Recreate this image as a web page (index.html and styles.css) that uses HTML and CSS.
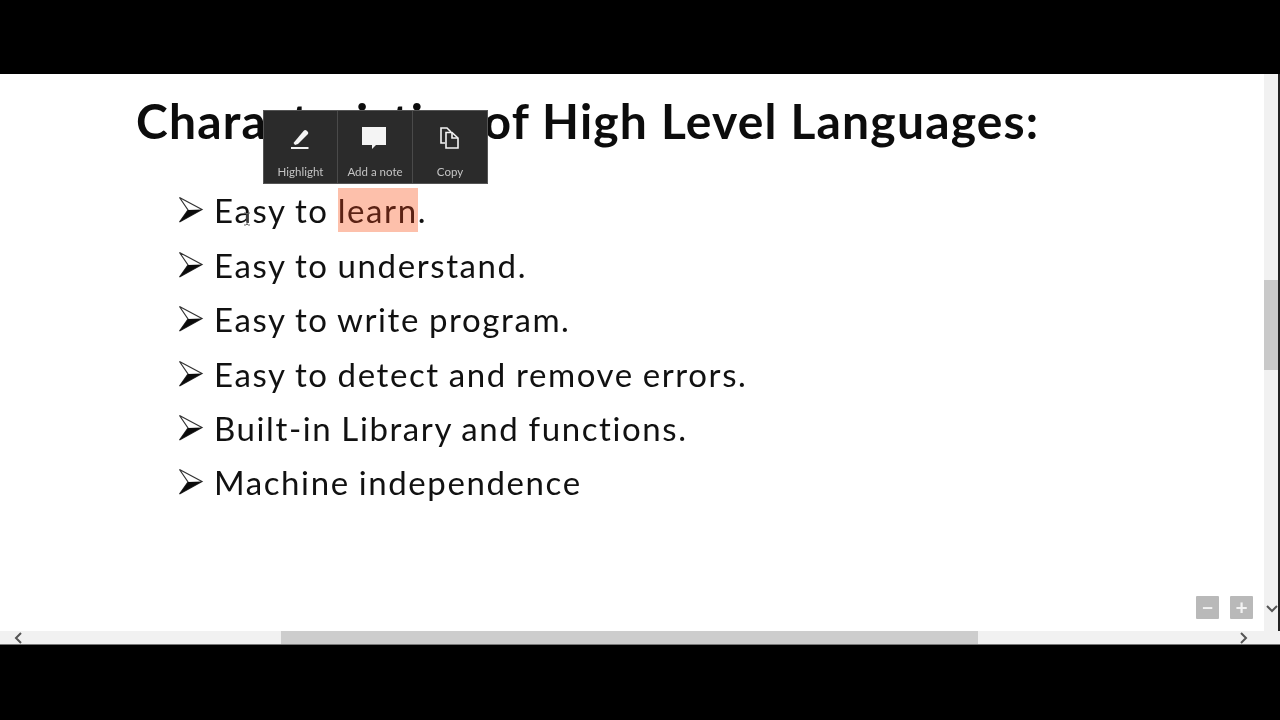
FILE: index.html
```html
<!DOCTYPE html>
<html lang="en">
<head>
<meta charset="utf-8">
<title>Characteristics of High Level Languages</title>
<link rel="stylesheet" href="styles.css">
</head>
<body>
<div class="letterbox-top"></div>
<div class="viewer">
  <div class="viewer-main">
    <main class="page">
      <h1 class="title">Characteristics of High Level Languages:</h1>
      <ul class="points">
        <li class="point"><svg class="arrow" viewBox="0 0 26 28"><path class="arrow-outline" d="M1.5 1.5 L24 13.5 L1.5 26 L10 14 Z"/><path class="arrow-fill" d="M1.5 26 L24 13.5 L10 14 Z"/></svg><span>Easy to <mark class="hl">learn</mark>.</span></li>
        <li class="point"><svg class="arrow" viewBox="0 0 26 28"><path class="arrow-outline" d="M1.5 1.5 L24 13.5 L1.5 26 L10 14 Z"/><path class="arrow-fill" d="M1.5 26 L24 13.5 L10 14 Z"/></svg><span>Easy to understand.</span></li>
        <li class="point"><svg class="arrow" viewBox="0 0 26 28"><path class="arrow-outline" d="M1.5 1.5 L24 13.5 L1.5 26 L10 14 Z"/><path class="arrow-fill" d="M1.5 26 L24 13.5 L10 14 Z"/></svg><span>Easy to write program.</span></li>
        <li class="point"><svg class="arrow" viewBox="0 0 26 28"><path class="arrow-outline" d="M1.5 1.5 L24 13.5 L1.5 26 L10 14 Z"/><path class="arrow-fill" d="M1.5 26 L24 13.5 L10 14 Z"/></svg><span>Easy to detect and remove errors.</span></li>
        <li class="point"><svg class="arrow" viewBox="0 0 26 28"><path class="arrow-outline" d="M1.5 1.5 L24 13.5 L1.5 26 L10 14 Z"/><path class="arrow-fill" d="M1.5 26 L24 13.5 L10 14 Z"/></svg><span>Built-in Library and functions.</span></li>
        <li class="point"><svg class="arrow" viewBox="0 0 26 28"><path class="arrow-outline" d="M1.5 1.5 L24 13.5 L1.5 26 L10 14 Z"/><path class="arrow-fill" d="M1.5 26 L24 13.5 L10 14 Z"/></svg><span>Machine independence</span></li>
      </ul>

      <div class="popup">
        <div class="popup-item">
          <svg class="popup-icon" viewBox="0 0 24 24"><path class="ic-fill" d="M5.5 17 L15.5 5 Q17 3.5 18.5 4.5 L20 6 Q20.5 7 20 8 L10 18 L7 19 Z"/><path class="ic-fill" d="M3 21 H20.5 V23 H3 Z"/></svg>
          <span class="popup-label">Highlight</span>
        </div>
        <div class="popup-item">
          <svg class="popup-icon" viewBox="0 0 24 24"><path class="ic-fill" d="M0 1 H24 V19 H14 L10 23 V19 H0 Z"/></svg>
          <span class="popup-label">Add a note</span>
        </div>
        <div class="popup-item">
          <svg class="popup-icon" viewBox="0 0 24 24"><path class="ic-line" d="M8 17 H4 V2 H10 L14 6"/><path class="ic-line" d="M9 6.5 H15 L21 12 V22 H9 Z"/><path class="ic-line" d="M15 7 V12 H21"/></svg>
          <span class="popup-label">Copy</span>
        </div>
      </div>

      <svg class="ibeam" viewBox="0 0 8 14"><path d="M1 1 H3 L4 2 L5 1 H7 M4 2 V12 M1 13 H3 L4 12 L5 13 H7"/></svg>

      <div class="zoom">
        <span class="zoom-btn">&#8722;</span>
        <span class="zoom-btn">+</span>
      </div>
    </main>
    <div class="vscroll">
      <div class="vtrack-top"></div>
      <div class="vthumb"></div>
      <div class="vtrack-bottom">
        <svg class="chev" viewBox="0 0 12 8"><path d="M1 1 L6 6 L11 1"/></svg>
      </div>
    </div>
    <div class="edge"></div>
  </div>
  <div class="hscroll">
    <svg class="chev-h chev-left" viewBox="0 0 8 12"><path d="M7 1 L2 6 L7 11"/></svg>
    <div class="hthumb"></div>
    <svg class="chev-h chev-right" viewBox="0 0 8 12"><path d="M1 1 L6 6 L1 11"/></svg>
  </div>
</div>
<div class="letterbox-bottom"></div>
</body>
</html>
```

FILE: styles.css
```css
* { box-sizing: border-box; }
html, body { margin: 0; padding: 0; }
body {
  width: 1280px;
  height: 720px;
  overflow: hidden;
  display: flex;
  flex-direction: column;
  background: #000;
  font-family: Lato, "Open Sans", sans-serif;
}
.letterbox-top { height: 74px; background: #000; }
.letterbox-bottom { height: 75px; background: #000; }
.viewer { height: 571px; display: flex; flex-direction: column; background: #fff; filter: blur(0.45px); }
.viewer-main { flex: 1; display: flex; min-height: 0; }
.page {
  position: relative;
  flex: 1;
  background: #fff;
  padding: 16px 0 0 136px;
  color: #111;
}
.title {
  margin: 0;
  font-size: 48px;
  line-height: 62px;
  font-weight: 700;
  letter-spacing: 1.18px;
  color: #0c0c0c;
  white-space: nowrap;
}
.points {
  list-style: none;
  margin: 37.4px 0 0 42px;
  padding: 0;
  display: flex;
  flex-direction: column;
  gap: 12.4px;
}
.point {
  display: flex;
  align-items: center;
  gap: 10px;
  height: 42px;
  font-size: 33px;
  line-height: 42px;
  letter-spacing: 1.6px;
  word-spacing: -1px;
  color: #111;
  white-space: nowrap;
}
.arrow { width: 26px; height: 28px; flex: none; }
.arrow-outline { fill: #fff; stroke: #333; stroke-width: 1.2; stroke-linejoin: miter; }
.arrow-fill { fill: #0a0a0a; }
.hl {
  background: #fdc0ab;
  color: #5b2214;
  display: inline-block;
  padding: 1px 0;
  line-height: 42px;
}
.popup {
  position: absolute;
  left: 263px;
  top: 36px;
  width: 225px;
  height: 74px;
  display: flex;
  background: #2b2b2b;
  border: 1px solid #555;
}
.popup-item {
  flex: 1;
  display: flex;
  flex-direction: column;
  align-items: center;
  padding-top: 17px;
  border-left: 1px solid #4a4a4a;
}
.popup-item:first-child { border-left: 0; flex: none; width: 73px; }
.popup-icon { width: 24px; height: 24px; flex: none; margin-top: -2px; margin-left: -2px; }
.ic-fill { fill: #f4f4f4; }
.ic-line { fill: none; stroke: #f4f4f4; stroke-width: 1.6; }
.popup-label {
  margin-top: 15px;
  font-size: 11.5px;
  line-height: 14px;
  color: #c4c4c4;
  white-space: nowrap;
}
.ibeam {
  position: absolute;
  left: 243px;
  top: 138px;
  width: 8px;
  height: 14px;
  fill: none;
  stroke: #666;
  stroke-width: 1;
}
.zoom {
  position: absolute;
  right: 11px;
  bottom: 12px;
  display: flex;
  gap: 11px;
}
.zoom-btn {
  width: 23px;
  height: 23px;
  background: #b9b9b9;
  color: #f2f2f2;
  font-size: 21px;
  line-height: 22px;
  font-weight: 700;
  text-align: center;
  border-radius: 1px;
}
.vscroll {
  width: 14px;
  background: #f1f1f1;
  display: flex;
  flex-direction: column;
}
.vtrack-top { height: 206px; }
.vthumb { height: 90px; background: #c9c9c9; }
.vtrack-bottom { flex: 1; display: flex; align-items: flex-end; justify-content: center; padding-bottom: 18px; }
.chev { width: 12px; height: 8px; fill: none; stroke: #555; stroke-width: 2; flex: none; margin-left: 2px; }
.edge { width: 2px; background: #222; }
.hscroll {
  height: 14px;
  background: #f1f1f1;
  display: flex;
  align-items: center;
  border-bottom: 1px solid #777;
}
.hthumb { width: 697px; height: 100%; background: #cdcdcd; margin-left: 256px; }
.chev-h { width: 8px; height: 12px; fill: none; stroke: #555; stroke-width: 2; flex: none; }
.chev-left { margin-left: 14px; margin-right: 3px; }
.chev-right { margin-left: 262px; }
```
